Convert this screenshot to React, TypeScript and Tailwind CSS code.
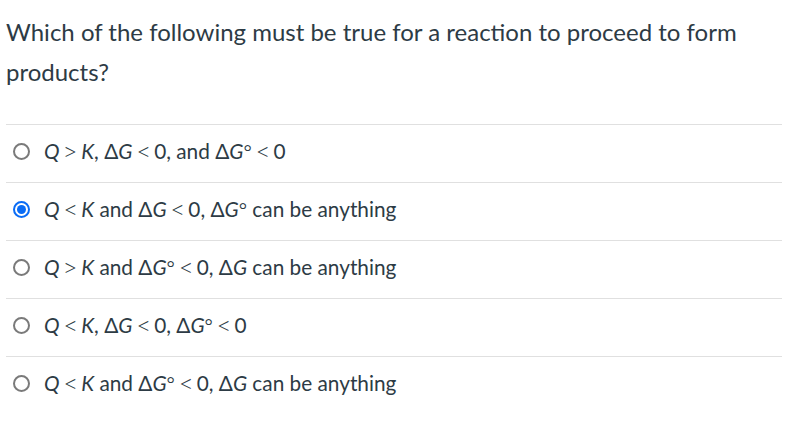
const Op = ({ c }: { c: string }) => (
  <span className="mx-[5px]" style={{ fontFamily: "'Liberation Serif', serif" }}>{c}</span>
);

const Deg = () => <span style={{ fontFamily: "'Liberation Serif', serif" }}>°</span>;

const options = [
  { id: "a", label: <><i>Q</i><Op c=">" /><i>K</i>, Δ<i>G</i><Op c="<" />0, and Δ<i>G</i><Deg /><Op c="<" />0</> },
  { id: "b", label: <><i>Q</i><Op c="<" /><i>K</i> and Δ<i>G</i><Op c="<" />0, Δ<i>G</i><Deg /> can be anything</>, checked: true },
  { id: "c", label: <><i>Q</i><Op c=">" /><i>K</i> and Δ<i>G</i><Deg /><Op c="<" />0, Δ<i>G</i> can be anything</> },
  { id: "d", label: <><i>Q</i><Op c="<" /><i>K</i>, Δ<i>G</i><Op c="<" />0, Δ<i>G</i><Deg /><Op c="<" />0</> },
  { id: "e", label: <><i>Q</i><Op c="<" /><i>K</i> and Δ<i>G</i><Deg /><Op c="<" />0, Δ<i>G</i> can be anything</> },
];

function Radio({ checked }: { checked?: boolean }) {
  return checked ? (
    <span className="flex items-center justify-center w-[17px] h-[17px] rounded-full border-2 border-[#0a6cf5] shrink-0">
      <span className="block w-[9px] h-[9px] rounded-full bg-[#0a6cf5]"></span>
    </span>
  ) : (
    <span className="block w-[17px] h-[17px] rounded-full border-2 border-[#7a7a7a] bg-white shrink-0"></span>
  );
}

export default function App() {
  return (
    <div className="bg-white w-[793px] h-[432px] pl-[6px] pr-[11px] text-[#2d3b45]" style={{ fontFamily: "Lato, 'Noto Sans', sans-serif" }}>
      {/* Question */}
      <p className="pt-[12px] mb-[32px] text-[24px] leading-[40px]">
        Which of the following must be true for a reaction to proceed to form products?
      </p>

      {/* Answers */}
      <div>
        {options.map((o) => (
          <div key={o.id} className="flex items-center h-[58px] pb-[5px] border-t border-[#e0e0e0] cursor-pointer">
            <div className="ml-[7px] mr-[14px] shrink-0">
              <Radio checked={o.checked} />
            </div>
            <span className="text-[20.8px]">{o.label}</span>
          </div>
        ))}
      </div>
    </div>
  );
}
